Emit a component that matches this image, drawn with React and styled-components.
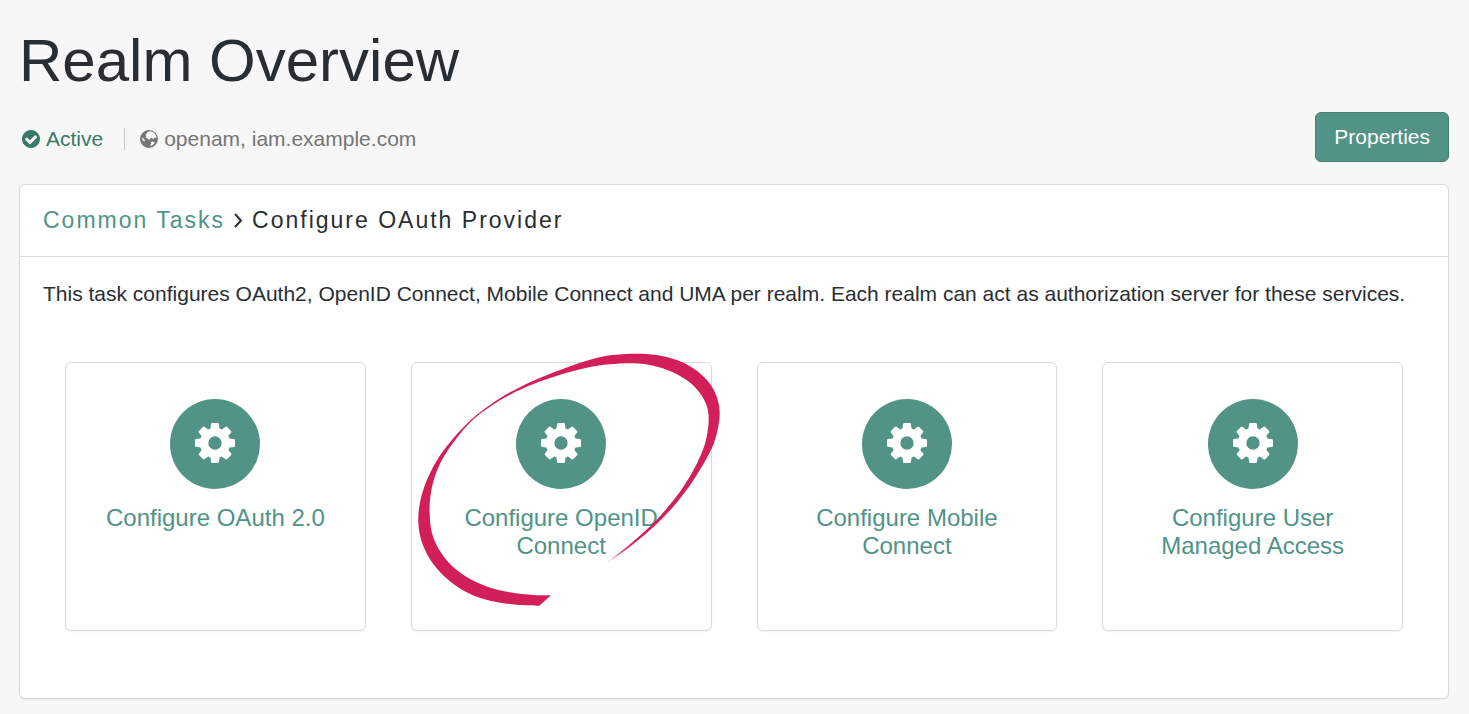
import React from 'react';
import styled, { createGlobalStyle } from 'styled-components';

const GlobalStyle = createGlobalStyle`
  *, *::before, *::after { box-sizing: border-box; }
  body {
    margin: 0;
    background: #f7f7f7;
    color: #292e33;
    font-family: Arial, "Liberation Sans", sans-serif;
    font-size: 21px;
    line-height: 30px;
  }
`;

const Page = styled.main`
  padding: 28px 20px 16px 19px;
`;

const Title = styled.h1`
  margin: 0;
  font-size: 60px;
  font-weight: 400;
  line-height: 66px;
`;

const Toolbar = styled.div`
  display: flex;
  align-items: center;
  justify-content: space-between;
  margin: 18px 0 22px;
`;

const StatusList = styled.ul`
  display: flex;
  align-items: center;
  margin: 0;
  padding: 4px 0 0;
  list-style: none;
`;

const Status = styled.li`
  display: flex;
  align-items: center;
  gap: 6px;
  padding: 0 3px;
  line-height: 22px;
  color: ${(p) => (p.$active ? '#387a69' : '#757575')};

  & + & {
    margin-left: 18px;
    padding-left: 15px;
    border-left: 1px solid #c8c8c8;
  }
`;

const Button = styled.button`
  height: 50px;
  padding: 0 18px;
  border: 1px solid #48806f;
  border-radius: 6px;
  background: #519387;
  color: #fff;
  font: inherit;
  cursor: pointer;
`;

const Panel = styled.section`
  border: 1px solid #dadada;
  border-radius: 6px;
  background: #fff;
  box-shadow: 0 1px 2px rgba(0, 0, 0, 0.06);
`;

const PanelHeader = styled.nav`
  display: flex;
  align-items: center;
  gap: 9px;
  padding: 20px 23px;
  border-bottom: 1px solid #dadada;
  font-size: 23px;
  line-height: 31px;
  letter-spacing: 2px;
`;

const Crumb = styled.a`
  color: #519387;
  text-decoration: none;
`;

const PanelBody = styled.div`
  padding: 22px 22px 67px 23px;
`;

const Description = styled.p`
  margin: 0;
`;

const Cards = styled.div`
  display: grid;
  grid-template-columns: repeat(4, 1fr);
  gap: 45px;
  padding: 0 23px 0 22px;
  margin-top: 53px;
`;

const Card = styled.a`
  position: relative;
  display: flex;
  flex-direction: column;
  align-items: center;
  min-height: 269px;
  padding: 36px 30px;
  border: 1px solid #dadada;
  border-radius: 6px;
  box-shadow: 0 1px 2px rgba(0, 0, 0, 0.06);
  color: #519387;
  font-size: 24px;
  line-height: 28px;
  text-align: center;
  text-decoration: none;
`;

const Badge = styled.span`
  display: flex;
  align-items: center;
  justify-content: center;
  width: 90px;
  height: 90px;
  margin-bottom: 15px;
  padding-bottom: 2px;
  border-radius: 50%;
  background: #519387;
  color: #fff;
`;

const Marker = styled.svg`
  position: absolute;
  top: -23px;
  left: -12px;
  z-index: 1;
  overflow: visible;
  pointer-events: none;
`;

const Icon = ({ size, path, box = '0 0 1536 1536' }) => (
  <svg width={size} height={size} viewBox={box} fill="currentColor" aria-hidden="true">
    <path fillRule="evenodd" d={path} />
  </svg>
);

const COG =
  'M1024 768q0-106-75-181t-181-75-181 75-75 181 75 181 181 75 181-75 75-181zm512-109v222q0 12-8 23t-20 13l-185 28q-19 54-39 91 35 50 107 138 10 12 10 25t-9 23q-27 37-99 108t-94 71q-12 0-26-9l-138-108q-44 23-91 38-16 136-29 186-7 28-36 28h-222q-14 0-24.5-8.5t-11.5-21.5l-28-184q-49-16-90-37l-141 107q-10 9-25 9-14 0-25-11-126-114-165-168-7-10-7-23 0-12 8-23 15-21 51-66.5t54-70.5q-27-50-41-99l-183-27q-13-2-21-12.5t-8-23.5v-222q0-12 8-23t19-13l186-28q14-46 39-92-40-57-107-138-10-12-10-24 0-10 9-23 26-36 98.5-107.5t94.5-71.5q13 0 26 10l138 107q44-23 91-38 16-136 29-186 7-28 36-28h222q14 0 24.5 8.5t11.5 21.5l28 184q49 16 90 37l142-107q9-9 24-9 13 0 25 10 129 119 165 170 7 8 7 22 0 12-8 23-15 21-51 66.5t-54 70.5q26 50 41 98l183 28q13 2 21 12.5t8 23.5z';

const CHECK =
  'M1284 606q0-28-18-46l-91-90q-19-19-45-19t-45 19l-408 407-226-226q-19-19-45-19t-45 19l-91 90q-18 18-18 46 0 27 18 45l362 362q19 19 45 19 27 0 46-19l543-543q18-18 18-45zm252 162q0 209-103 385.5t-279.5 279.5-385.5 103-385.5-103-279.5-279.5-103-385.5 103-385.5 279.5-279.5 385.5-103 385.5 103 279.5 279.5 103 385.5z';

const GLOBE =
  'M9 0a9 9 0 1 0 0 18a9 9 0 1 0 0-18zM7.4 2L10 1.3L12.6 1.9L14.8 3.4L16.2 5.6L16.6 8L15.2 7.4L13.8 8L14.2 9.2L12.6 8.8L11.6 7.6L10.4 8.6L9.2 9.8L8 9.2L7 7.8L5.4 7.4L6.4 5.8L5.2 4.6L6.6 3.8zM1.8 7L3 8L4.2 9.6L5.2 10.6L4.4 11.4L2.8 10.4zM10.8 12L12.4 11.4L14.4 12L14.6 13L13 14.8L11 16L10.4 14.8L11.4 13.4z';

const CARDS = [
  { label: 'Configure OAuth 2.0' },
  { label: 'Configure OpenID Connect', marked: true },
  { label: 'Configure Mobile Connect' },
  { label: 'Configure User Managed Access' },
];

// Edges of the hand-drawn ring, from its thin tail round to the blunt end and back.
const RING_OUTER = [
  [622, 668], [700, 612], [770, 552], [830, 488], [878, 424], [920, 355], [946, 297],
  [959, 225], [950, 170], [924, 124], [882, 86], [830, 60], [770, 45], [705, 41],
  [630, 46], [560, 62], [480, 90], [400, 122], [330, 157], [270, 195], [215, 238],
  [158, 297], [110, 362], [75, 434], [57, 505], [57, 570], [75, 630], [110, 685],
  [160, 732], [222, 767], [290, 786], [350, 794], [418, 797],
];
const RING_INNER = [
  [453, 766], [400, 765], [330, 757], [262, 740], [200, 711], [150, 672], [115, 625],
  [95, 575], [89, 520], [91, 470], [103, 415], [127, 358], [164, 302], [217, 241],
  [270, 200], [330, 164], [400, 132], [480, 104], [560, 83], [630, 73], [700, 70],
  [760, 77], [815, 95], [865, 124], [900, 160], [921, 200], [926, 243], [918, 300],
  [900, 350], [869, 410], [825, 475], [767, 542], [698, 606], [622, 668],
];

const curve = (points) =>
  points
    .slice(0, -1)
    .map((p, i) => {
      const before = points[i - 1] || p;
      const next = points[i + 1];
      const after = points[i + 2] || next;
      const c1 = [p[0] + (next[0] - before[0]) / 6, p[1] + (next[1] - before[1]) / 6];
      const c2 = [next[0] - (after[0] - p[0]) / 6, next[1] - (after[1] - p[1]) / 6];
      return `C${c1} ${c2} ${next}`;
    })
    .join('');

const RING = `M${RING_OUTER[0]}${curve(RING_OUTER)}L${RING_INNER[0]}${curve(RING_INNER)}Z`;

const HandCircle = () => (
  <Marker width="320" height="270" viewBox="0 0 960 810" aria-hidden="true">
    <path fill="#d31f58" d={RING} />
  </Marker>
);

export default function App() {
  return (
    <>
      <GlobalStyle />
      <Page>
        <Title>Realm Overview</Title>
        <Toolbar>
          <StatusList>
            <Status $active>
              <Icon size={18} path={CHECK} />
              Active
            </Status>
            <Status>
              <Icon size={18} path={GLOBE} box="0 0 18 18" />
              openam, iam.example.com
            </Status>
          </StatusList>
          <Button type="button">Properties</Button>
        </Toolbar>
        <Panel>
          <PanelHeader aria-label="Breadcrumb">
            <Crumb href="#tasks">Common Tasks</Crumb>
            <svg width="9" height="15" viewBox="0 0 9 15" fill="none" stroke="currentColor" strokeWidth="2" aria-hidden="true">
              <path d="M1 1l6 6.500-6 6.500" />
            </svg>
            <span>Configure OAuth Provider</span>
          </PanelHeader>
          <PanelBody>
            <Description>
              This task configures OAuth2, OpenID Connect, Mobile Connect and UMA per realm. Each
              realm can act as authorization server for these services.
            </Description>
            <Cards>
              {CARDS.map((card) => (
                <Card key={card.label} href="#configure">
                  <Badge>
                    <Icon size={40} path={COG} />
                  </Badge>
                  {card.label}
                  {card.marked && <HandCircle />}
                </Card>
              ))}
            </Cards>
          </PanelBody>
        </Panel>
      </Page>
    </>
  );
}
